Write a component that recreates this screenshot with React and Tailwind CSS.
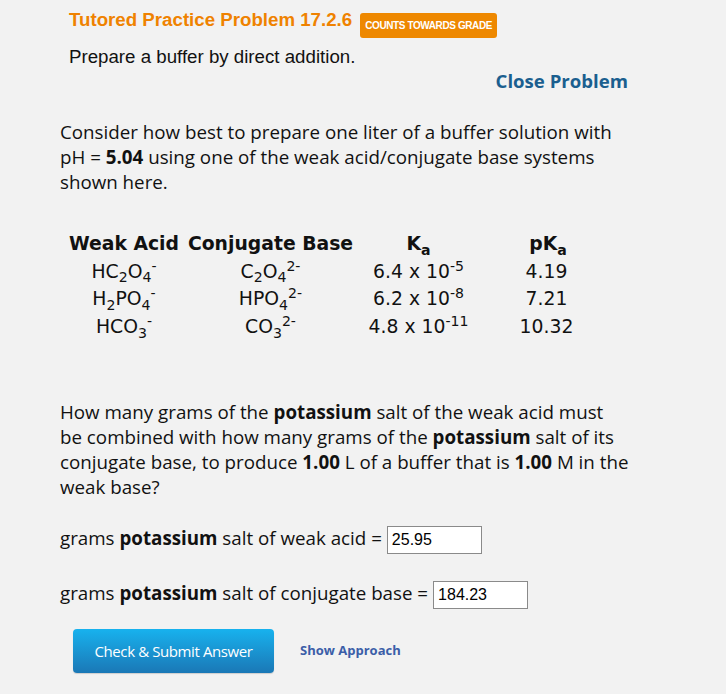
const sans = { fontFamily: '"Liberation Sans", Arial, sans-serif' }

function Sub({ children }) {
  return <span className="relative top-[0.33em] text-[0.75em] leading-none">{children}</span>
}
function Sup({ children }) {
  return <span className="relative -top-[0.5em] text-[0.75em] leading-none">{children}</span>
}

const rows = [
  { acid: <>HC<Sub>2</Sub>O<Sub>4</Sub><Sup>-</Sup></>, base: <>C<Sub>2</Sub>O<Sub>4</Sub><Sup>2-</Sup></>, ka: <>6.4 x 10<Sup>-5</Sup></>, pka: '4.19' },
  { acid: <>H<Sub>2</Sub>PO<Sub>4</Sub><Sup>-</Sup></>, base: <>HPO<Sub>4</Sub><Sup>2-</Sup></>, ka: <>6.2 x 10<Sup>-8</Sup></>, pka: '7.21' },
  { acid: <>HCO<Sub>3</Sub><Sup>-</Sup></>, base: <>CO<Sub>3</Sub><Sup>2-</Sup></>, ka: <>4.8 x 10<Sup>-11</Sup></>, pka: '10.32' },
]

export default function App() {
  return (
    <div className="min-h-screen w-full bg-[#f2f2f2] text-[#111]" style={{ fontFamily: '"Open Sans", sans-serif' }}>
      {/* ── Header ── */}
      <div className="pl-[69px] pt-[8px] w-[628px]">
        <div className="flex items-start gap-[8px]">
          <h1 className="text-[18.7px] font-bold text-[#ef8200] leading-[24px]" style={sans}>
            Tutored Practice Problem 17.2.6
          </h1>
          <span
            className="mt-[5px] h-[25px] px-[5px] flex items-center rounded-[3px] bg-[#ee8800] text-white text-[10px] font-bold tracking-[-0.4px]"
            style={sans}
          >
            COUNTS TOWARDS GRADE
          </span>
        </div>
        <p className="mt-[7px] text-[18.7px] leading-[24px]" style={sans}>
          Prepare a buffer by direct addition.
        </p>
        <div className="mt-[1px] text-right">
          <a className="text-[18.6px] font-bold leading-[20px] text-[#1b5f8f] cursor-pointer">Close Problem</a>
        </div>
      </div>

      {/* ── Problem ── */}
      <div className="pl-[60px] text-[18.75px]">
        <p className="mt-[25px] leading-[25px] whitespace-nowrap">
          Consider how best to prepare one liter of a buffer solution with<br />
          pH = <b>5.04</b> using one of the weak acid/conjugate base systems<br />
          shown here.
        </p>

        <div
          className="mt-[36px] ml-[4px] grid grid-cols-[120px_173px_123px_136px] text-center text-[18.8px] leading-[27.7px]"
          style={{ fontFamily: '"DejaVu Sans", Verdana, sans-serif' }}
        >
          <div className="font-bold">Weak Acid</div>
          <div className="font-bold">Conjugate Base</div>
          <div className="font-bold">K<Sub>a</Sub></div>
          <div className="font-bold">pK<Sub>a</Sub></div>
          {rows.map((r, i) => (
            <div key={i} className="contents">
              <div>{r.acid}</div>
              <div>{r.base}</div>
              <div>{r.ka}</div>
              <div className="pr-[3px]">{r.pka}</div>
            </div>
          ))}
        </div>

        <p className="mt-[58px] leading-[25px] whitespace-nowrap">
          How many grams of the <b>potassium</b> salt of the weak acid must<br />
          be combined with how many grams of the <b>potassium</b> salt of its<br />
          conjugate base, to produce <b>1.00</b> L of a buffer that is <b>1.00</b> M in the<br />
          weak base?
        </p>

        <div className="mt-[27px] flex items-start gap-[5px]">
          <span className="-mt-[1px] leading-[25px]">grams <b>potassium</b> salt of weak acid =</span>
          <input
            readOnly
            value="25.95"
            className="w-[95px] h-[28px] px-[4px] bg-white border border-[#8a8a8a] text-[16px] text-black outline-none"
            style={sans}
          />
        </div>

        <div className="mt-[27px] flex items-start gap-[5px]">
          <span className="-mt-[1px] leading-[25px]">grams <b>potassium</b> salt of conjugate base =</span>
          <input
            readOnly
            value="184.23"
            className="w-[95px] h-[28px] px-[4px] bg-white border border-[#8a8a8a] text-[16px] text-black outline-none"
            style={sans}
          />
        </div>

        <div className="mt-[20px] ml-[13px] flex items-center gap-[26px]">
          <button className="w-[201px] h-[44px] rounded-[4px] bg-gradient-to-b from-[#17b2ee] to-[#1a78b6] text-white text-[15px] tracking-[-0.4px] shadow-[0_1px_1px_rgba(0,0,0,0.15)]">
            Check &amp; Submit Answer
          </button>
          <a className="text-[13px] font-bold text-[#3b5ea8] cursor-pointer">Show Approach</a>
        </div>
      </div>
    </div>
  )
}
